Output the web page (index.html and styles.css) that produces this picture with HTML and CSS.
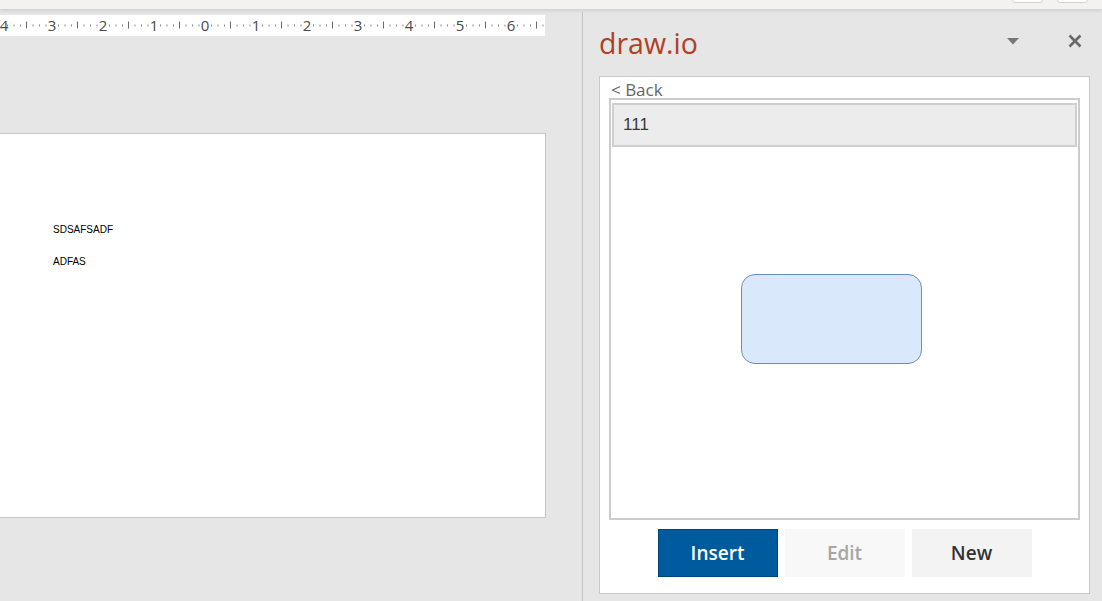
FILE: index.html
```html
<!DOCTYPE html>
<html>
<head>
<meta charset="utf-8">
<link rel="stylesheet" href="styles.css">
</head>
<body>
<div class="topbar">
  <span class="tb-btn"></span>
  <span class="tb-btn"></span>
</div>
<div class="main">
  <div class="doc">
    <div class="ruler">
      <svg width="545" height="21" viewBox="0 0 545 21">
        <defs>
          <pattern id="tk" x="1" y="0" width="51" height="21" patternUnits="userSpaceOnUse">
            <rect x="6" y="9.5" width="1" height="2" fill="#8a8a8a"/>
            <rect x="12.5" y="9.5" width="1" height="2" fill="#8a8a8a"/>
            <rect x="19" y="9.5" width="1" height="2" fill="#8a8a8a"/>
            <rect x="25" y="6.5" width="1" height="7" fill="#6a6a6a"/>
            <rect x="31.5" y="9.5" width="1" height="2" fill="#8a8a8a"/>
            <rect x="38" y="9.5" width="1" height="2" fill="#8a8a8a"/>
            <rect x="44.5" y="9.5" width="1" height="2" fill="#8a8a8a"/>
          </pattern>
        </defs>
        <rect x="7" width="538" height="21" fill="url(#tk)"/>
        <g class="rnum">
          <text x="4" y="16">4</text>
          <text x="52" y="16">3</text>
          <text x="103" y="16">2</text>
          <text x="154" y="16">1</text>
          <text x="205" y="16">0</text>
          <text x="256" y="16">1</text>
          <text x="307" y="16">2</text>
          <text x="358" y="16">3</text>
          <text x="409" y="16">4</text>
          <text x="460" y="16">5</text>
          <text x="511" y="16">6</text>
        </g>
      </svg>
    </div>
    <div class="slide">
      <p>SDSAFSADF</p>
      <p>ADFAS</p>
    </div>
  </div>
  <div class="panel">
    <div class="panel-head">
      <h1 class="title">draw.io</h1>
      <svg class="ico-tri" width="12" height="7" viewBox="0 0 12 7"><polygon points="0,0 12,0 6,6.5" fill="#777"/></svg>
      <svg class="ico-x" width="14" height="14" viewBox="0 0 14 14"><path d="M1.5 1.5 L12.5 12.5 M12.5 1.5 L1.5 12.5" stroke="#6a6a6a" stroke-width="2.6" fill="none"/></svg>
    </div>
    <div class="card">
      <div class="back">&lt; Back</div>
      <div class="list">
        <div class="item">111</div>
        <div class="preview"><div class="shape"></div></div>
      </div>
      <div class="actions">
        <button class="btn btn-primary">Insert</button>
        <button class="btn btn-disabled">Edit</button>
        <button class="btn btn-default">New</button>
      </div>
    </div>
  </div>
</div>
</body>
</html>
```

FILE: styles.css
```css
* { box-sizing: border-box; }
html, body { margin: 0; padding: 0; }
body {
  width: 1102px;
  height: 601px;
  overflow: hidden;
  background: #e6e6e6;
  font-family: "Open Sans", "Noto Sans", sans-serif;
}
.topbar {
  height: 9px;
  background: #f3f2f1;
  box-shadow: 0 1px 4px rgba(0,0,0,0.14);
  display: flex;
  justify-content: flex-end;
  align-items: flex-end;
  gap: 14px;
  padding-right: 14px;
  position: relative;
  z-index: 1;
}
.tb-btn {
  width: 31px;
  height: 12px;
  margin-bottom: 6px;
  background: #fff;
  border: 1px solid #d6d4d2;
  border-radius: 3px;
}
.main {
  display: flex;
  height: 592px;
}
.doc {
  width: 583px;
  border-right: 1px solid #c4c4c4;
  margin-top: 3px;
}
.ruler {
  margin-top: 3px;
  width: 545px;
  height: 21px;
  background: #fff;
}
.ruler svg { display: block; }
.rnum text {
  font-family: "Open Sans", sans-serif;
  font-size: 15px;
  fill: #4a4a4a;
  text-anchor: middle;
}
.slide {
  margin-top: 97px;
  width: 546px;
  height: 385px;
  background: #fff;
  border: 1px solid #c6c6c6;
  border-left: none;
  padding: 89px 0 0 53px;
}
.slide p {
  margin: 0 0 18px;
  font-family: "Liberation Sans", Arial, sans-serif;
  font-size: 10px;
  line-height: 14px;
  color: #000;
}
.panel {
  flex: 1;
  display: flex;
  flex-direction: column;
}
.panel-head {
  height: 67px;
  display: flex;
  align-items: flex-start;
  padding: 16px 20px 0 16px;
}
.title {
  margin: 0;
  font-family: "Open Sans", sans-serif;
  font-weight: 400;
  font-size: 28.5px;
  line-height: 36px;
  color: #b03f25;
}
.ico-tri { margin: 13px 0 0 auto; }
.ico-x { margin: 9px 0 0 49px; }
.card {
  width: 491px;
  height: 518px;
  margin-left: 16px;
  background: #fff;
  border: 1px solid #c8c8c8;
  padding: 4px 9px 16px 9px;
  display: flex;
  flex-direction: column;
}
.back {
  height: 17px;
  padding-left: 2px;
  font-size: 17px;
  line-height: 17px;
  color: #666;
  white-space: nowrap;
}
.list {
  height: 422px;
  border: 2px solid #cccccc;
  padding: 3px 1px 0 1px;
}
.item {
  height: 44px;
  border: 2px solid #cfcfcf;
  background: #ececec;
  padding-left: 9px;
  font-family: "Liberation Sans", Arial, sans-serif;
  font-size: 17px;
  line-height: 40px;
  color: #3a3a3a;
}
.preview {
  padding: 127px 0 0 129px;
}
.shape {
  width: 181px;
  height: 90px;
  background: #dae8fc;
  border: 1.5px solid #6c8ebf;
  border-radius: 14px;
}
.actions {
  margin-top: 9px;
  display: flex;
  justify-content: center;
  gap: 7px;
}
.btn {
  width: 120px;
  height: 48px;
  font-family: "Open Sans", sans-serif;
  font-weight: 600;
  font-size: 19px;
  border: none;
  padding: 0;
}
.btn-primary {
  background: #005a9e;
  border: 1px solid #004578;
  color: #fff;
}
.btn-disabled {
  background: #f8f8f8;
  color: #a6a6a6;
}
.btn-default {
  background: #f3f3f3;
  color: #333;
}
```
